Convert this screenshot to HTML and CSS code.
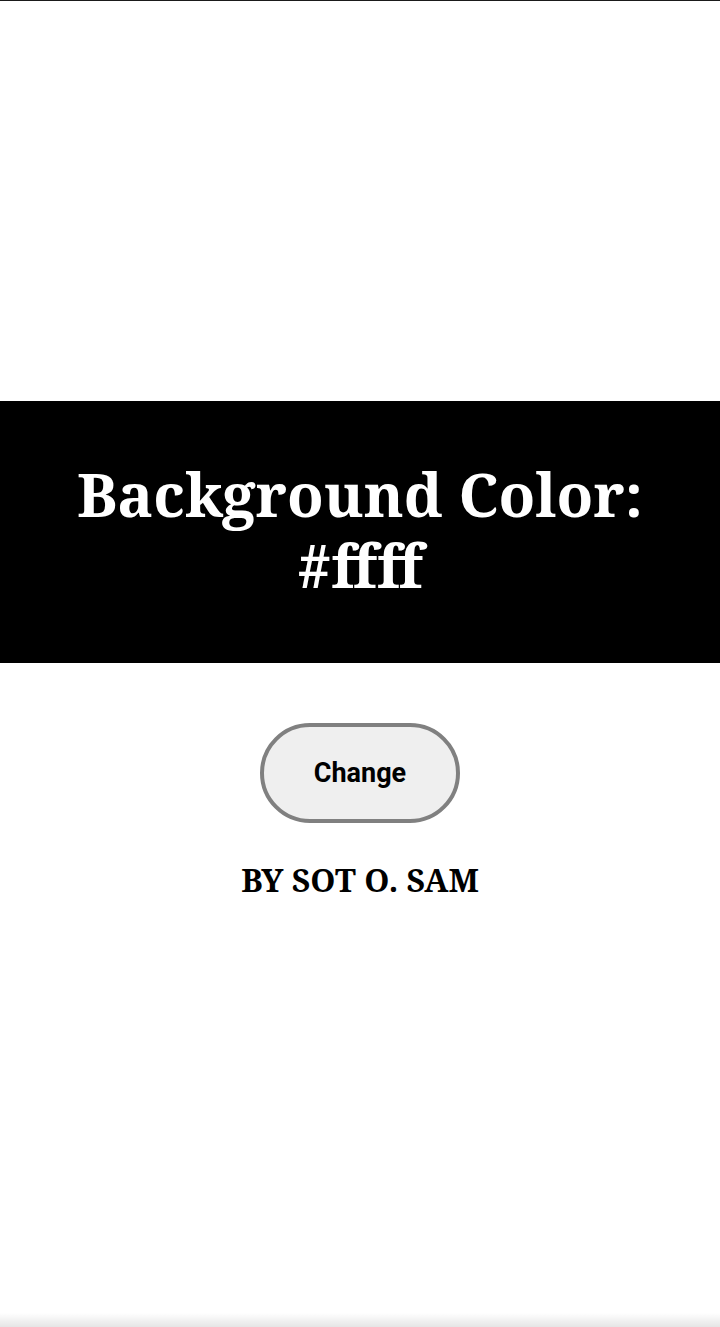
FILE: index.html
```html
<!DOCTYPE html>
<html lang="en">
<head>
    <meta charset="UTF-8">
    <meta name="viewport" content="width=device-width, initial-scale=1.0">
    <title>Background Color Changer</title>
    <link rel="stylesheet" href="styles.css">
</head>
<body>
    <div class="page">
        <header class="banner">
            <h1 id="colorLabel">Background Color: #ffff</h1>
        </header>

        <main>
            <button class="change-button" onclick="changeColor()">Change</button>
            <p class="author">BY SOT O. SAM</p>
        </main>

        <div class="bottom-fade"></div>
    </div>

    <script>
        function changeColor() {
            const hex = '#' + Math.floor(Math.random() * 0xffffff).toString(16).padStart(6, '0');
            document.querySelector('.page').style.backgroundColor = hex;
            document.getElementById('colorLabel').textContent = 'Background Color: ' + hex;
        }
    </script>
</body>
</html>
```

FILE: styles.css
```css
body {
    margin: 0;
    font-family: "Noto Serif", "DejaVu Serif", serif;
}
.page {
    min-height: 1327px;
    box-sizing: border-box;
    border-top: 1px solid #1a1a1a;
    background-color: #fff;
    display: flex;
    flex-direction: column;
}
.banner {
    margin-top: 400px;
    background-color: #000;
    padding: 58px 20px 62px;
    text-align: center;
}
.banner h1 {
    margin: 0;
    color: #fff;
    font-size: 60px;
    line-height: 71px;
    font-weight: bold;
}
main {
    flex: 1;
    display: flex;
    flex-direction: column;
    align-items: center;
    padding-top: 60px;
}
.change-button {
    width: 200px;
    height: 100px;
    border: 4px solid #808080;
    border-radius: 50px;
    background-color: #efefef;
    color: #000;
    font-family: Roboto, sans-serif;
    font-size: 27px;
    font-weight: bold;
    cursor: pointer;
}
.author {
    margin: 35px 0 0;
    font-size: 32px;
    font-weight: bold;
    color: #000;
}
.bottom-fade {
    height: 14px;
    background: linear-gradient(to bottom, rgba(0, 0, 0, 0), rgba(0, 0, 0, 0.1));
}
```
